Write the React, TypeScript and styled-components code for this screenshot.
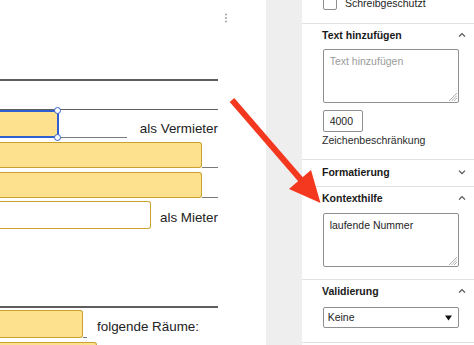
import React from 'react';
import styled, { createGlobalStyle } from 'styled-components';

const Global = createGlobalStyle`
  html, body { margin: 0; padding: 0; background: #fff; overflow: hidden; }
  body { font-family: "Liberation Sans", Arial, sans-serif; }
  * { box-sizing: border-box; }
`;

const Page = styled.div`
  position: relative;
  display: flex;
  width: 474px;
  height: 345px;
  overflow: hidden;
  background: #fff;
`;

/* ---------- document canvas ---------- */
const Doc = styled.div`
  width: 266px;
  flex: none;
  display: flex;
  flex-direction: column;
  font-family: "Liberation Sans", Arial, sans-serif;
  font-size: 13.4px;
  color: #222;
`;

const DocTop = styled.div`
  height: 79px;
  flex: none;
  display: flex;
  justify-content: flex-end;
  padding: 13px 38px 0 0;
`;

const Rule = styled.div<{ $mt?: number }>`
  width: 218px;
  height: 1.5px;
  flex: none;
  background: #5e5e5e;
  margin-top: ${p => p.$mt ?? 0}px;
`;

const Row = styled.div<{ $mt: number; $h: number }>`
  width: 218px;
  height: ${p => p.$h}px;
  margin-top: ${p => p.$mt}px;
  display: flex;
  align-items: flex-end;
  flex: none;
`;

const Field = styled.div<{ $w: number; $empty?: boolean; $selected?: boolean }>`
  position: relative;
  width: ${p => p.$w}px;
  height: 100%;
  flex: none;
  background: ${p => (p.$empty ? '#fff' : '#fee18e')};
  border: ${p => (p.$selected ? '2px solid #2f5fd0' : '1px solid #c9a12c')};
  border-left: none;
  border-radius: ${p => (p.$selected ? '0' : '0 3px 3px 0')};
`;

const Handle = styled.span<{ $pos: 'top' | 'bottom' }>`
  position: absolute;
  right: -4.5px;
  ${p => (p.$pos === 'top' ? 'top: -4.5px;' : 'bottom: -4.5px;')}
  width: 7px;
  height: 7px;
  border-radius: 50%;
  background: #fff;
  border: 1.5px solid #2f5fd0;
`;

const Underline = styled.div<{ $w?: number }>`
  ${p => (p.$w ? `width: ${p.$w}px; flex: none;` : 'flex: 1;')}
  height: 0;
  border-bottom: 1.5px solid #7a7a7a;
`;

const Label = styled.span<{ $ml?: number; $mb: number }>`
  margin-left: ${p => (p.$ml === undefined ? 'auto' : `${p.$ml}px`)};
  margin-bottom: ${p => p.$mb}px;
  line-height: 16px;
  white-space: nowrap;
`;

const Gutter = styled.div`
  width: 36px;
  flex: none;
  background: #efeeef;
`;

/* ---------- sidebar ---------- */
const Sidebar = styled.div`
  width: 172px;
  flex: none;
  display: flex;
  flex-direction: column;
  margin-top: -4px;
  background: #fff;
  font-size: 10.5px;
  color: #1e1e1e;
`;

const Section = styled.div<{ $pb?: number }>`
  flex: none;
  display: flex;
  flex-direction: column;
  align-items: flex-start;
  padding: 0 8px ${p => p.$pb ?? 0}px 20px;
  border-bottom: 1px solid #e2e2e2;
`;

const CheckRow = styled.label`
  display: flex;
  align-items: center;
  gap: 8px;
  height: 14px;
  padding-left: 1px;
  line-height: 13px;
`;

const Box = styled.span`
  width: 14px;
  height: 14px;
  border: 1px solid #8f8f8f;
  border-radius: 2px;
  background: #fff;
`;

const Header = styled.div<{ $h: number }>`
  align-self: stretch;
  display: flex;
  align-items: center;
  justify-content: space-between;
  height: ${p => p.$h}px;
  font-weight: 700;
  font-size: 10.5px;
  color: #1a1a1a;
`;

const TextBox = styled.div<{ $mt: number }>`
  position: relative;
  margin-top: ${p => p.$mt}px;
  margin-left: 0.7px;
`;

const Area = styled.textarea`
  display: block;
  width: 136px;
  height: 54px;
  margin: 0;
  border: 1px solid #8f8f8f;
  border-radius: 2px;
  padding: 5px 6px;
  font: 10.5px/13px "Liberation Sans", Arial, sans-serif;
  color: #1e1e1e;
  resize: none;
  outline: none;
  background: #fff;
  &::placeholder { color: #9b9b9b; }
`;

const Grip = styled.svg`
  position: absolute;
  right: 2px;
  bottom: 2px;
`;

const NumberInput = styled.input`
  display: block;
  width: 40px;
  height: 22.3px;
  margin: 6.7px 0 0 0.7px;
  border: 1px solid #8f8f8f;
  border-radius: 2px;
  padding: 0 0 0 6px;
  font: 10.5px "Liberation Sans", Arial, sans-serif;
  color: #1e1e1e;
  outline: none;
`;

const Help = styled.div`
  margin-top: 1.5px;
  line-height: 13px;
  color: #2a2a2a;
`;

const SelectBox = styled.div`
  position: relative;
  margin: 3.7px 0 0 0.7px;
`;

const Select = styled.select`
  display: block;
  width: 136px;
  height: 21.6px;
  margin: 0;
  appearance: none;
  -webkit-appearance: none;
  border: 1px solid #8f8f8f;
  border-radius: 2px;
  padding: 0 0 0 4px;
  background: #fff;
  font: 10.5px "Liberation Sans", Arial, sans-serif;
  color: #1e1e1e;
  outline: none;
`;

const Caret = styled.svg`
  position: absolute;
  right: 6.7px;
  top: 8px;
  pointer-events: none;
`;

const Overlay = styled.svg`
  position: absolute;
  left: 0;
  top: 0;
  pointer-events: none;
`;

const Chevron = ({ up }: { up?: boolean }) => (
  <svg width="8" height="6" viewBox="0 0 8 6">
    <path
      d={up ? 'M1 4.6 L4 1.6 L7 4.6' : 'M1 1.6 L4 4.6 L7 1.6'}
      fill="none"
      stroke="#555"
      strokeWidth="1.3"
    />
  </svg>
);

const GripIcon = () => (
  <Grip width="9" height="9" viewBox="0 0 9 9">
    <path d="M9 1 L1 9 M9 3.5 L3.5 9 M9 6 L6 9" stroke="#9a9a9a" strokeWidth="0.8" />
  </Grip>
);

export default function App() {
  return (
    <>
      <Global />
      <Page>
        <Doc>
          <DocTop>
            <svg width="4" height="10" viewBox="0 0 4 10">
              <circle cx="2" cy="1.5" r="0.9" fill="#999" />
              <circle cx="2" cy="5" r="0.9" fill="#999" />
              <circle cx="2" cy="8.5" r="0.9" fill="#999" />
            </svg>
          </DocTop>
          <Rule />
          <Rule $mt={28.2} />
          <Row $mt={-0.5} $h={28.6}>
            <Field $w={58.5} $selected>
              <Handle $pos="top" />
              <Handle $pos="bottom" />
            </Field>
            <Underline $w={68.5} />
            <Label $mb={1}>als Vermieter</Label>
          </Row>
          <Row $mt={3.7} $h={26.3}>
            <Field $w={202} />
            <Underline />
          </Row>
          <Row $mt={3.4} $h={26.8}>
            <Field $w={202} />
            <Underline />
          </Row>
          <Row $mt={2.7} $h={28}>
            <Field $w={151} $empty />
            <Label $mb={3}>als Mieter</Label>
          </Row>
          <Rule $mt={77} />
          <Row $mt={2.5} $h={27.7}>
            <Field $w={83} />
            <Underline $w={4} />
            <Label $ml={10} $mb={3}>folgende Räume:</Label>
          </Row>
          <Row $mt={4} $h={27}>
            <Field $w={97} />
          </Row>
        </Doc>
        <Gutter />
        <Sidebar>
          <Section $pb={12.7}>
            <CheckRow>
              <Box />
              <span>Schreibgeschützt</span>
            </CheckRow>
          </Section>
          <Section $pb={12.5}>
            <Header $h={23}>
              <span>Text hinzufügen</span>
              <Chevron up />
            </Header>
            <TextBox $mt={2.6}>
              <Area placeholder="Text hinzufügen" readOnly />
              <GripIcon />
            </TextBox>
            <NumberInput type="text" value="4000" readOnly />
            <Help>Zeichenbeschränkung</Help>
          </Section>
          <Section $pb={2.7}>
            <Header $h={23}>
              <span>Formatierung</span>
              <Chevron />
            </Header>
          </Section>
          <Section $pb={11.7}>
            <Header $h={23}>
              <span>Kontexthilfe</span>
              <Chevron up />
            </Header>
            <TextBox $mt={3.3}>
              <Area defaultValue="laufende Nummer" readOnly />
              <GripIcon />
            </TextBox>
          </Section>
          <Section $pb={13.4}>
            <Header $h={23}>
              <span>Validierung</span>
              <Chevron up />
            </Header>
            <SelectBox>
              <Select defaultValue="Keine">
                <option>Keine</option>
              </Select>
              <Caret width="7" height="6" viewBox="0 0 7 6">
                <polygon points="0,0.5 7,0.5 3.5,5.5" fill="#111" />
              </Caret>
            </SelectBox>
          </Section>
          <Section $pb={30} />
        </Sidebar>
        <Overlay width="474" height="345" viewBox="0 0 474 345">
          <line x1="232" y1="100" x2="302" y2="181" stroke="#f4381f" strokeWidth="6" />
          <polygon points="311,170 320.5,203 289,189" fill="#f4381f" />
        </Overlay>
      </Page>
    </>
  );
}
